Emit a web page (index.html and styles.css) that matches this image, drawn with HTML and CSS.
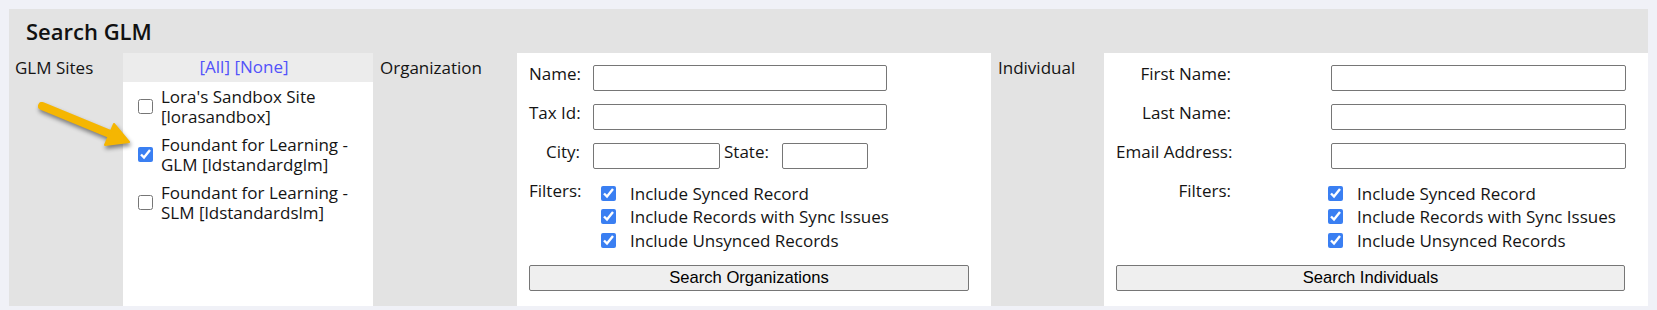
FILE: index.html
```html
<!DOCTYPE html>
<html lang="en">
<head>
<meta charset="utf-8">
<title>Search GLM</title>
<link rel="stylesheet" href="styles.css">
</head>
<body>
<div class="panel">
  <div class="title">Search GLM</div>
  <div class="row">
    <div class="col-label col-sites-label">GLM Sites</div>
    <div class="sites">
      <div class="sites-head"><a class="lnk">[All]</a> <a class="lnk">[None]</a></div>
      <ul class="site-list">
        <li class="site"><input type="checkbox" class="cb"><span class="site-text">Lora's Sandbox Site [lorasandbox]</span></li>
        <li class="site"><input type="checkbox" class="cb" checked><span class="site-text">Foundant for Learning - GLM [ldstandardglm]</span></li>
        <li class="site"><input type="checkbox" class="cb"><span class="site-text">Foundant for Learning - SLM [ldstandardslm]</span></li>
      </ul>
    </div>
    <div class="col-label col-org-label">Organization</div>
    <div class="box box-org">
      <div class="fields fields-org">
        <label class="flabel">Name:</label>
        <input type="text" class="inp inp-wide">
        <label class="flabel">Tax Id:</label>
        <input type="text" class="inp inp-wide">
        <label class="flabel">City:</label>
        <div class="city-row">
          <input type="text" class="inp inp-city">
          <label class="state-label">State:</label>
          <input type="text" class="inp inp-state">
        </div>
      </div>
      <div class="filters filters-org">
        <div class="filters-label">Filters:</div>
        <div class="filter-list">
          <div class="filter"><input type="checkbox" class="cb cb-f" checked><span>Include Synced Record</span></div>
          <div class="filter"><input type="checkbox" class="cb cb-f" checked><span>Include Records with Sync Issues</span></div>
          <div class="filter"><input type="checkbox" class="cb cb-f" checked><span>Include Unsynced Records</span></div>
        </div>
      </div>
      <button class="btn btn-org" type="button">Search Organizations</button>
    </div>
    <div class="col-label col-ind-label">Individual</div>
    <div class="box box-ind">
      <div class="fields fields-ind">
        <label class="flabel">First Name:</label>
        <input type="text" class="inp inp-ind">
        <label class="flabel">Last Name:</label>
        <input type="text" class="inp inp-ind">
        <label class="flabel">Email Address:</label>
        <input type="text" class="inp inp-ind">
      </div>
      <div class="filters filters-ind">
        <div class="filters-label">Filters:</div>
        <div class="filter-list">
          <div class="filter"><input type="checkbox" class="cb cb-f" checked><span>Include Synced Record</span></div>
          <div class="filter"><input type="checkbox" class="cb cb-f" checked><span>Include Records with Sync Issues</span></div>
          <div class="filter"><input type="checkbox" class="cb cb-f" checked><span>Include Unsynced Records</span></div>
        </div>
      </div>
      <button class="btn btn-ind" type="button">Search Individuals</button>
    </div>
  </div>
  <svg class="arrow" width="150" height="170" viewBox="0 0 150 170" aria-hidden="true">
    <line x1="42" y1="106" x2="110" y2="134" stroke="#f5b602" stroke-width="8" stroke-linecap="round"/>
    <polygon points="129,142 105,145 114,124" fill="#f5b602" stroke="#f5b602" stroke-width="2" stroke-linejoin="round"/>
  </svg>
</div>
</body>
</html>
```

FILE: styles.css
```css
html, body {
  margin: 0;
  padding: 0;
}
body {
  background: #f0f1f7;
  font-family: "Open Sans", "Noto Sans", sans-serif;
  font-size: 17px;
  color: #141414;
}
.panel {
  position: relative;
  margin: 9px 0 0 9px;
  width: 1639px;
  height: 297px;
  background: #e3e3e3;
  display: flex;
  flex-direction: column;
}
.title {
  box-sizing: border-box;
  height: 44px;
  padding: 7px 0 0 17px;
  font-size: 22px;
  line-height: 30px;
  font-weight: 600;
  color: #111;
}
.row {
  display: flex;
  height: 253px;
}
.col-label {
  box-sizing: border-box;
  padding-top: 6px;
  line-height: 17px;
}
.col-sites-label {
  width: 114px;
  padding-left: 6px;
}
.col-org-label {
  width: 144px;
  padding-left: 7px;
}
.col-ind-label {
  width: 113px;
  padding-left: 7px;
}
.sites {
  width: 250px;
  background: #fff;
}
.sites-head {
  height: 29px;
  line-height: 27px;
  background: #ececec;
  text-align: center;
  padding-right: 8px;
  box-sizing: border-box;
}
.lnk {
  color: #5252fa;
  cursor: pointer;
}
.site-list {
  list-style: none;
  margin: 0;
  padding: 5px 8px 0 15px;
  display: flex;
  flex-direction: column;
  gap: 9px;
}
.site {
  display: flex;
  align-items: center;
  gap: 8px;
  line-height: 19.5px;
}
.site-text {
  width: 200px;
}
.cb {
  margin: 0;
  width: 15px;
  height: 15px;
  flex: none;
  accent-color: #3a7ff2;
}
.cb-f {
  width: 15px;
  height: 15px;
}
.box {
  box-sizing: border-box;
  background: #fff;
  padding: 12px 0 0 12px;
  display: flex;
  flex-direction: column;
  align-items: flex-start;
}
.box-org {
  width: 474px;
}
.box-ind {
  width: 544px;
}
.fields {
  display: grid;
  row-gap: 13px;
  align-items: start;
}
.fields-org {
  grid-template-columns: 51px auto;
  column-gap: 13px;
}
.fields-ind {
  grid-template-columns: 115px auto;
  column-gap: 100px;
}
.flabel {
  text-align: right;
  line-height: 17px;
  white-space: nowrap;
}
.inp {
  box-sizing: border-box;
  height: 26px;
  margin: 0;
  border: 1px solid #767676;
  border-radius: 2px;
  background: #fff;
  padding: 1px 2px;
}
.inp-wide {
  width: 294px;
}
.inp-ind {
  width: 295px;
}
.city-row {
  display: flex;
  align-items: flex-start;
}
.inp-city {
  width: 127px;
}
.state-label {
  width: 62px;
  padding-left: 4px;
  box-sizing: border-box;
  line-height: 17px;
}
.inp-state {
  width: 86px;
}
.filters {
  display: flex;
  margin-top: 12.7px;
}
.filters-label {
  line-height: 17px;
  white-space: nowrap;
}
.filters-org .filters-label {
  width: 72px;
}
.filters-ind .filters-label {
  width: 115px;
  text-align: right;
  margin-right: 97px;
}
.filter-list {
  display: flex;
  flex-direction: column;
}
.filter {
  display: flex;
  align-items: center;
  gap: 14px;
  line-height: 23.5px;
  white-space: nowrap;
}
.btn {
  box-sizing: border-box;
  height: 26px;
  margin-top: 12.8px;
  border: 1px solid #767676;
  border-radius: 2px;
  background: #efefef;
  font-family: "Liberation Sans", Arial, sans-serif;
  font-size: 16.6px;
  color: #000;
  padding: 0;
}
.btn-org {
  width: 440px;
}
.btn-ind {
  width: 509px;
}
.arrow {
  position: absolute;
  left: -9px;
  top: -9px;
  filter: drop-shadow(1px 3px 2px rgba(0, 0, 0, 0.45));
  pointer-events: none;
}
```
